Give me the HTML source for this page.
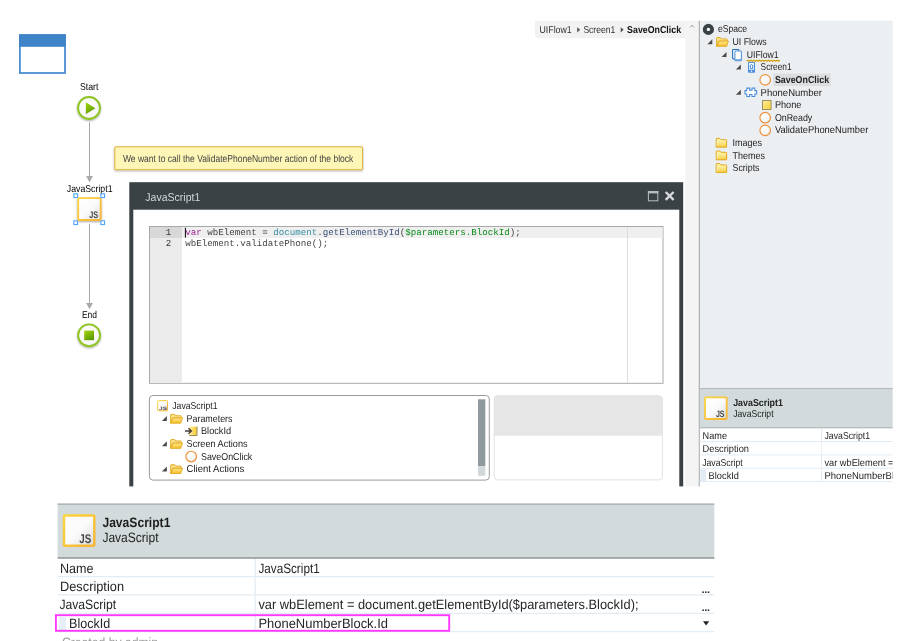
<!DOCTYPE html>
<html><head><meta charset="utf-8"><title>JavaScript1</title>
<style>
html,body{margin:0;padding:0;background:#fff;}
body{width:908px;height:641px;overflow:hidden;font-family:"Liberation Sans",sans-serif;}
svg{display:block;font-family:"Liberation Sans",sans-serif;text-rendering:geometricPrecision;}
.m{font-family:"Liberation Mono",monospace;}
</style></head><body>
<svg width="908" height="641" viewBox="0 0 908 641">
<defs>
<linearGradient id="gFold" x1="0" y1="0" x2="0" y2="1"><stop offset="0" stop-color="#fee88e"/><stop offset="1" stop-color="#f6bf2a"/></linearGradient>
<linearGradient id="gFold2" x1="0" y1="0" x2="0" y2="1"><stop offset="0" stop-color="#fdf0a0"/><stop offset="0.25" stop-color="#fdf2a8"/><stop offset="1" stop-color="#f7cd42"/></linearGradient>
<radialGradient id="gAct" cx="0.4" cy="0.35" r="0.75"><stop offset="0" stop-color="#ffffff"/><stop offset="0.6" stop-color="#f6f6f6"/><stop offset="1" stop-color="#dcdcdc"/></radialGradient>
<linearGradient id="gJs" x1="0" y1="0" x2="1" y2="1"><stop offset="0" stop-color="#ffffff"/><stop offset="0.5" stop-color="#fbfbfb"/><stop offset="1" stop-color="#d9d9d9"/></linearGradient>
<linearGradient id="gJsB" x1="0" y1="0" x2="1" y2="1"><stop offset="0" stop-color="#fbd63c"/><stop offset="1" stop-color="#f8b436"/></linearGradient>
<linearGradient id="gGreen" x1="0" y1="0" x2="0.6" y2="1"><stop offset="0" stop-color="#a5d610"/><stop offset="1" stop-color="#5d9a00"/></linearGradient>
<radialGradient id="gBall" cx="0.45" cy="0.4" r="0.7"><stop offset="0" stop-color="#ffffff"/><stop offset="0.7" stop-color="#f7f7f7"/><stop offset="1" stop-color="#e2e2e2"/></radialGradient>
<linearGradient id="gParam" x1="0" y1="0" x2="1" y2="0"><stop offset="0" stop-color="#fdf0a0"/><stop offset="1" stop-color="#f6c92c"/></linearGradient>
<linearGradient id="gPhone" x1="0" y1="0" x2="1" y2="1"><stop offset="0" stop-color="#fdee9a"/><stop offset="1" stop-color="#f7cf3a"/></linearGradient>
<filter id="sh" x="-30%" y="-30%" width="160%" height="170%"><feGaussianBlur in="SourceAlpha" stdDeviation="0.9"/><feOffset dx="0.4" dy="0.9"/><feComponentTransfer><feFuncA type="linear" slope="0.35"/></feComponentTransfer><feMerge><feMergeNode/><feMergeNode in="SourceGraphic"/></feMerge></filter>
</defs>
<rect width="908" height="641" fill="#fff"/>
<g opacity="0.999">

<path d="M535 20.7 L685.2 20.7 L685.2 38.3 L539 38.3 Q535 38.3 535 34.3 Z" fill="#f2f2f2"/>
<text x="539.5" y="32.5" font-size="10" fill="#303030" font-weight="400" text-anchor="start" textLength="32.2" lengthAdjust="spacingAndGlyphs">UIFlow1</text>
<path d="M577.2 27.2 L580.2 29.8 L577.2 32.4 Z" fill="#555"/>
<text x="583.4" y="32.5" font-size="10" fill="#303030" font-weight="400" text-anchor="start" textLength="31.8" lengthAdjust="spacingAndGlyphs">Screen1</text>
<path d="M620.7 27.2 L623.7 29.8 L620.7 32.4 Z" fill="#555"/>
<text x="627.1" y="32.5" font-size="10" fill="#111" font-weight="700" text-anchor="start" textLength="54" lengthAdjust="spacingAndGlyphs">SaveOnClick</text>
<rect x="685.2" y="20.7" width="13.8" height="465.7" fill="#f4f4f4"/>
<path d="M690.2 27.4 L692.2 25.2 L694.2 27.4" fill="none" stroke="#9c9c9c" stroke-width="1"/>
<rect x="699.6" y="20.7" width="193.1" height="367.8" fill="#ebeff2"/>
<line x1="699.3" y1="20.7" x2="699.3" y2="486.4" stroke="#94989a" stroke-width="0.9"/>
<circle cx="708.4" cy="29.400000000000002" r="3.65" fill="#fff" stroke="#3a4245" stroke-width="3.9"/>
<text x="718" y="32.4" font-size="10" fill="#1c1c1c" font-weight="400" text-anchor="start" textLength="29.1" lengthAdjust="spacingAndGlyphs">eSpace</text>
<path d="M712.3 39.32 L712.3 44.32 L707.3 44.32 Z" fill="#4c4c4c"/>
<g transform="translate(716.1 37.02)"><path d="M0.5 9.3 L0.5 1.1 Q0.5 0.5 1.1 0.5 L4.4 0.5 L5.5 1.9 L10.4 1.9 Q11 1.9 11 2.5 L11 4.2 L2.6 4.2 Z" fill="#fbe38c" stroke="#e2a418" stroke-width="0.9"/><path d="M2.7 4.0 L12.3 4.0 L10.5 9.3 L0.6 9.3 Z" fill="url(#gFold)" stroke="#e3a61a" stroke-width="0.9" stroke-linejoin="round"/></g>
<text x="732.5" y="45.02" font-size="10" fill="#1c1c1c" font-weight="400" text-anchor="start" textLength="34.1" lengthAdjust="spacingAndGlyphs">UI Flows</text>
<path d="M726.5 51.94 L726.5 56.94 L721.5 56.94 Z" fill="#4c4c4c"/>
<rect x="732.6" y="49.44" width="6.3" height="9.4" fill="#fff" stroke="#1c6fbe" stroke-width="1.1" rx="0.8"/>
<rect x="734.9" y="51.04" width="6.5" height="9.7" fill="#fff" stroke="#5b97d6" stroke-width="1.1" rx="0.8"/>
<line x1="735.4" y1="59.94" x2="741" y2="59.94" stroke="#5b97d6" stroke-width="1.4"/>
<text x="746.8" y="57.64" font-size="10" fill="#1c1c1c" font-weight="400" text-anchor="start" textLength="31.9" lengthAdjust="spacingAndGlyphs">UIFlow1</text>
<path d="M746.6 61.24 L748.05 60.24 L749.50 61.24 L750.95 60.24 L752.40 61.24 L753.85 60.24 L755.30 61.24 L756.75 60.24 L758.20 61.24 L759.65 60.24 L761.10 61.24 L762.55 60.24 L764.00 61.24 L765.45 60.24 L766.90 61.24 L768.35 60.24 L769.80 61.24 L771.25 60.24 L772.70 61.24 L774.15 60.24 L775.60 61.24 L777.05 60.24 L778.50 61.24 L779.95 60.24" fill="none" stroke="#d39f10" stroke-width="1.15"/>
<path d="M740.9 64.56 L740.9 69.56 L735.9 69.56 Z" fill="#4c4c4c"/>
<rect x="748" y="61.959999999999994" width="7" height="10.7" fill="#4a8ede" rx="0.9"/>
<rect x="749.1" y="62.959999999999994" width="4.8" height="6.8" fill="#fff"/>
<path d="M749.7 66.56 L751.5 64.16 L753.3 66.56 M750.4 66.25999999999999 L750.4 68.66 L752.6 68.66 L752.6 66.25999999999999" fill="none" stroke="#3b7fd0" stroke-width="0.9"/>
<circle cx="751.5" cy="71.25999999999999" r="0.7" fill="#fff"/>
<text x="760.6" y="70.26" font-size="10" fill="#1c1c1c" font-weight="400" text-anchor="start" textLength="31" lengthAdjust="spacingAndGlyphs">Screen1</text>
<rect x="773.3" y="73.58" width="57.5" height="12.5" fill="#dcdfe1"/>
<circle cx="765.2" cy="79.88" r="5.3" fill="url(#gAct)" stroke="#f0913a" stroke-width="1.15"/>
<text x="774.9" y="82.88" font-size="10" fill="#222" font-weight="700" text-anchor="start" textLength="54.2" lengthAdjust="spacingAndGlyphs">SaveOnClick</text>
<path d="M740.9 89.8 L740.9 94.8 L735.9 94.8 Z" fill="#4c4c4c"/>
<g transform="translate(744.5 87.60000000000001)" fill="#fff" stroke="#4a8cd8" stroke-width="1.05"><path d="M2.3 0.5 L5.1 0.5 L5.1 2.5 L7.5 2.5 L7.5 0.5 L10.3 0.5 L10.3 3 L12.1 3 L12.1 6.3 L10.3 6.3 L10.3 8.9 L7.5 8.9 L7.5 6.9 L5.1 6.9 L5.1 8.9 L2.3 8.9 L2.3 6.3 L0.5 6.3 L0.5 3 L2.3 3 Z"/></g>
<text x="760.6" y="95.5" font-size="10" fill="#1c1c1c" font-weight="400" text-anchor="start" textLength="61.4" lengthAdjust="spacingAndGlyphs">PhoneNumber</text>
<rect x="762.5" y="100.61999999999999" width="8.6" height="8.8" fill="url(#gPhone)" stroke="#8a7a4a" stroke-width="0.8"/>
<text x="774.9" y="108.12" font-size="10" fill="#1c1c1c" font-weight="400" text-anchor="start" textLength="26.5" lengthAdjust="spacingAndGlyphs">Phone</text>
<circle cx="765.2" cy="117.74" r="5.3" fill="url(#gAct)" stroke="#f0913a" stroke-width="1.15"/>
<text x="774.9" y="120.74" font-size="10" fill="#1c1c1c" font-weight="400" text-anchor="start" textLength="37.4" lengthAdjust="spacingAndGlyphs">OnReady</text>
<circle cx="765.2" cy="130.35999999999999" r="5.3" fill="url(#gAct)" stroke="#f0913a" stroke-width="1.15"/>
<text x="774.9" y="133.36" font-size="10" fill="#1c1c1c" font-weight="400" text-anchor="start" textLength="93.4" lengthAdjust="spacingAndGlyphs">ValidatePhoneNumber</text>
<g transform="translate(715.7 137.88)"><path d="M0.5 9.3 L0.5 1.1 Q0.5 0.5 1.1 0.5 L4.2 0.5 L5.3 1.8 L10.3 1.8 Q10.9 1.8 10.9 2.4 L10.9 9.3 Z" fill="url(#gFold2)" stroke="#e2a418" stroke-width="0.95" stroke-linejoin="round"/><path d="M1.5 3.0 L1.5 8.4" stroke="#fffbe0" stroke-width="0.8" opacity="0.8"/></g>
<text x="732.5" y="145.98" font-size="10" fill="#1c1c1c" font-weight="400" text-anchor="start" textLength="29.4" lengthAdjust="spacingAndGlyphs">Images</text>
<g transform="translate(715.7 150.5)"><path d="M0.5 9.3 L0.5 1.1 Q0.5 0.5 1.1 0.5 L4.2 0.5 L5.3 1.8 L10.3 1.8 Q10.9 1.8 10.9 2.4 L10.9 9.3 Z" fill="url(#gFold2)" stroke="#e2a418" stroke-width="0.95" stroke-linejoin="round"/><path d="M1.5 3.0 L1.5 8.4" stroke="#fffbe0" stroke-width="0.8" opacity="0.8"/></g>
<text x="732.5" y="158.6" font-size="10" fill="#1c1c1c" font-weight="400" text-anchor="start" textLength="32.4" lengthAdjust="spacingAndGlyphs">Themes</text>
<g transform="translate(715.7 163.12)"><path d="M0.5 9.3 L0.5 1.1 Q0.5 0.5 1.1 0.5 L4.2 0.5 L5.3 1.8 L10.3 1.8 Q10.9 1.8 10.9 2.4 L10.9 9.3 Z" fill="url(#gFold2)" stroke="#e2a418" stroke-width="0.95" stroke-linejoin="round"/><path d="M1.5 3.0 L1.5 8.4" stroke="#fffbe0" stroke-width="0.8" opacity="0.8"/></g>
<text x="732.5" y="171.22" font-size="10" fill="#1c1c1c" font-weight="400" text-anchor="start" textLength="27" lengthAdjust="spacingAndGlyphs">Scripts</text>
<rect x="699.9" y="388.5" width="192.8" height="39.5" fill="#d2dadc"/>
<line x1="699.9" y1="388.6" x2="892.7" y2="388.6" stroke="#aeb5b7" stroke-width="1"/>
<line x1="699.9" y1="428" x2="892.7" y2="428" stroke="#9ba2a4" stroke-width="1"/>
<rect x="705.1" y="397.29999999999995" width="21.6" height="21.7" fill="url(#gJs)" stroke="url(#gJsB)" stroke-width="1.8" rx="0.8"/>
<text x="724.6" y="417.3" font-size="9.2" fill="#484848" font-weight="700" text-anchor="end" textLength="8.7" lengthAdjust="spacingAndGlyphs">JS</text>
<text x="733.2" y="405.8" font-size="10" fill="#222" font-weight="700" text-anchor="start" textLength="49.7" lengthAdjust="spacingAndGlyphs">JavaScript1</text>
<text x="733.2" y="416.7" font-size="10" fill="#222" font-weight="400" text-anchor="start" textLength="40.4" lengthAdjust="spacingAndGlyphs">JavaScript</text>
<rect x="699.9" y="428.5" width="192.8" height="57.9" fill="#fff"/>
<line x1="699.9" y1="441.55" x2="892.7" y2="441.55" stroke="#e2ecf4" stroke-width="1"/>
<line x1="699.9" y1="454.9" x2="892.7" y2="454.9" stroke="#e2ecf4" stroke-width="1"/>
<line x1="699.9" y1="468.25" x2="892.7" y2="468.25" stroke="#e2ecf4" stroke-width="1"/>
<line x1="699.9" y1="481.6" x2="892.7" y2="481.6" stroke="#e2ecf4" stroke-width="1"/>
<line x1="821.7" y1="428.5" x2="821.7" y2="481.6" stroke="#e2ecf4" stroke-width="1"/>
<rect x="700.2" y="468.85" width="5.8" height="12.25" fill="#e3ecf5"/>
<text x="702.6" y="438.8" font-size="10" fill="#1e1e1e" font-weight="400" text-anchor="start" textLength="24.4" lengthAdjust="spacingAndGlyphs">Name</text>
<text x="702.6" y="452.1" font-size="10" fill="#1e1e1e" font-weight="400" text-anchor="start" textLength="46.4" lengthAdjust="spacingAndGlyphs">Description</text>
<text x="702.2" y="465.5" font-size="10" fill="#1e1e1e" font-weight="400" text-anchor="start" textLength="40.6" lengthAdjust="spacingAndGlyphs">JavaScript</text>
<text x="708.6" y="478.8" font-size="10" fill="#1e1e1e" font-weight="400" text-anchor="start" textLength="30.4" lengthAdjust="spacingAndGlyphs">BlockId</text>
<clipPath id="cpR"><rect x="700" y="428" width="192.70000000000005" height="58.39999999999998"/></clipPath>
<g clip-path="url(#cpR)">
<text x="824.5" y="438.8" font-size="10" fill="#1e1e1e" font-weight="400" text-anchor="start" textLength="45.5" lengthAdjust="spacingAndGlyphs">JavaScript1</text>
<text x="824.5" y="465.5" font-size="10" fill="#1e1e1e" font-weight="400" text-anchor="start" textLength="112" lengthAdjust="spacingAndGlyphs">var wbElement = document</text>
<text x="824.5" y="478.8" font-size="10" fill="#1e1e1e" font-weight="400" text-anchor="start" textLength="94.8" lengthAdjust="spacingAndGlyphs">PhoneNumberBlock.Id</text>
</g>
<rect x="19.9" y="35.2" width="45.1" height="37.8" fill="#fff" stroke="#4a8dd2" stroke-width="1.8"/>
<rect x="19.0" y="34.3" width="46.9" height="12.5" fill="#3e84c7"/>
<text x="79.9" y="90.4" font-size="10" fill="#000" font-weight="400" text-anchor="start" textLength="18.5" lengthAdjust="spacingAndGlyphs">Start</text>
<line x1="89.5" y1="122.4" x2="89.5" y2="177" stroke="#a6a6a6" stroke-width="1"/>
<path d="M86.1 176 L92.9 176 L89.5 182.6 Z" fill="#a9a9a9"/>
<g filter="url(#sh)"><circle cx="89" cy="108" r="10.95" fill="url(#gBall)" stroke="#8fc424" stroke-width="1.9"/></g>
<path d="M85.8 102.2 L95.4 108.2 L85.8 114.2 Z" fill="url(#gGreen)"/>
<text x="66.8" y="191.7" font-size="10" fill="#000" font-weight="400" text-anchor="start" textLength="45.7" lengthAdjust="spacingAndGlyphs">JavaScript1</text>
<line x1="89.5" y1="224" x2="89.5" y2="304" stroke="#a6a6a6" stroke-width="1"/>
<path d="M86.1 303 L92.9 303 L89.5 309.2 Z" fill="#a9a9a9"/>
<g filter="url(#sh)">
<rect x="78.2" y="198.2" width="22.5" height="21.8" fill="url(#gJs)" stroke="url(#gJsB)" stroke-width="1.8" rx="0.8"/>
</g>
<text x="98.2" y="218.0" font-size="9.6" fill="#484848" font-weight="700" text-anchor="end" textLength="8.9" lengthAdjust="spacingAndGlyphs">JS</text>
<rect x="73.85" y="193.85000000000002" width="3.7" height="3.7" fill="#fff" stroke="#4da4fb" stroke-width="1.1"/>
<rect x="73.85" y="220.85000000000002" width="3.7" height="3.7" fill="#fff" stroke="#4da4fb" stroke-width="1.1"/>
<rect x="100.85" y="193.85000000000002" width="3.7" height="3.7" fill="#fff" stroke="#4da4fb" stroke-width="1.1"/>
<rect x="100.85" y="220.85000000000002" width="3.7" height="3.7" fill="#fff" stroke="#4da4fb" stroke-width="1.1"/>
<text x="81.9" y="317.7" font-size="10" fill="#000" font-weight="400" text-anchor="start" textLength="15.1" lengthAdjust="spacingAndGlyphs">End</text>
<g filter="url(#sh)"><circle cx="89.1" cy="335.3" r="10.95" fill="url(#gBall)" stroke="#8fc424" stroke-width="1.9"/></g>
<rect x="84.2" y="330.6" width="9.8" height="9.6" fill="url(#gGreen)"/>
<g filter="url(#sh)">
<rect x="114.8" y="146.8" width="247.7" height="22.9" fill="#fdf6b6" stroke="#e2b43a" stroke-width="1" rx="0.6"/>
</g>
<text x="122.9" y="162" font-size="10.1" fill="#454545" font-weight="400" text-anchor="start" textLength="230.5" lengthAdjust="spacingAndGlyphs">We want to call the ValidatePhoneNumber action of the block</text>
<rect x="129.3" y="182.2" width="553.9" height="304.2" fill="#3a4245"/>
<rect x="133.3" y="209.7" width="546.0" height="278.3" fill="#fff"/>
<text x="145.3" y="200.9" font-size="11.4" fill="#d4d7d8" font-weight="400" text-anchor="start" textLength="55" lengthAdjust="spacingAndGlyphs">JavaScript1</text>
<rect x="648.4" y="191.6" width="9.4" height="9.2" fill="none" stroke="#b9bec0" stroke-width="1"/>
<rect x="647.9" y="191.0" width="10.4" height="2.4" fill="#b9bec0"/>
<path d="M665.7 192 L673.6 199.9 M673.6 192 L665.7 199.9" stroke="#d6d9da" stroke-width="2.4" fill="none"/>
<rect x="149.5" y="226.5" width="513.5" height="156.8" fill="#fff" stroke="#a9a9a9" stroke-width="1"/>
<rect x="150" y="227" width="32" height="155.8" fill="#ebebeb"/>
<rect x="150" y="227" width="32" height="11" fill="#d8d8d8"/>
<rect x="182" y="227" width="480.5" height="11" fill="#efefef"/>
<line x1="627.5" y1="227" x2="627.5" y2="382.8" stroke="#dddddd" stroke-width="1"/>
<text x="171.2" y="235" font-size="9.17" fill="#333" font-weight="400" text-anchor="end" class="m">1</text>
<text x="171.2" y="246.1" font-size="9.17" fill="#333" font-weight="400" text-anchor="end" class="m">2</text>
<line x1="185.4" y1="227.8" x2="185.4" y2="237.6" stroke="#000" stroke-width="1"/>
<text class="m" x="185.3" y="235" font-size="9.17" textLength="335.5" lengthAdjust="spacingAndGlyphs" xml:space="preserve" fill="#444"><tspan fill="#a0209a">var</tspan> wbElement = <tspan fill="#3a8ea4">document</tspan>.<tspan fill="#3d5578">getElementById</tspan>(<tspan fill="#0a8a1a">$parameters.BlockId</tspan>);</text>
<text class="m" x="185.3" y="246.1" font-size="9.17" textLength="143.0" lengthAdjust="spacingAndGlyphs" fill="#444">wbElement.validatePhone();</text>
<rect x="149.4" y="395.5" width="339.9" height="84.6" fill="#fff" stroke="#9a9a9a" stroke-width="1" rx="3.5"/>
<rect x="478" y="399.3" width="7.3" height="66.9" fill="#8f9a9e"/>
<rect x="478" y="466.2" width="7.3" height="9.6" fill="#d2d8da"/>
<clipPath id="cpB"><rect x="494.2" y="395.8" width="168.2" height="84.1" rx="3.5"/></clipPath>
<g clip-path="url(#cpB)"><rect x="494" y="395" width="169" height="86" fill="#fff"/><rect x="494" y="395" width="169" height="40.7" fill="#e6e6e6"/></g>
<rect x="494.2" y="395.8" width="168.2" height="84.1" fill="none" stroke="#e2e2e2" stroke-width="1" rx="3.5"/>
<rect x="157.7" y="400.6" width="9.8" height="10.2" fill="url(#gJs)" stroke="url(#gJsB)" stroke-width="1.0" rx="0.8"/>
<text x="167.0" y="409.8" font-size="4.8" fill="#484848" font-weight="700" text-anchor="end" textLength="8" lengthAdjust="spacingAndGlyphs">JS</text>
<text x="172.3" y="409.2" font-size="10" fill="#1c1c1c" font-weight="400" text-anchor="start" textLength="45.2" lengthAdjust="spacingAndGlyphs">JavaScript1</text>
<path d="M166.9 416.05 L166.9 421.05 L161.9 421.05 Z" fill="#4c4c4c"/>
<g transform="translate(170.2 413.84999999999997)"><path d="M0.5 9.3 L0.5 1.1 Q0.5 0.5 1.1 0.5 L4.4 0.5 L5.5 1.9 L10.4 1.9 Q11 1.9 11 2.5 L11 4.2 L2.6 4.2 Z" fill="#fbe38c" stroke="#e2a418" stroke-width="0.9"/><path d="M2.7 4.0 L12.3 4.0 L10.5 9.3 L0.6 9.3 Z" fill="url(#gFold)" stroke="#e3a61a" stroke-width="0.9" stroke-linejoin="round"/></g>
<text x="186.6" y="421.75" font-size="10" fill="#1c1c1c" font-weight="400" text-anchor="start" textLength="45.9" lengthAdjust="spacingAndGlyphs">Parameters</text>
<rect x="189.2" y="426.65" width="7.6" height="8.7" fill="url(#gParam)"/>
<path d="M189.2 435.55 L197 435.55 L197 426.65" fill="none" stroke="#8b7b52" stroke-width="0.9"/>
<path d="M185 431.05 L190.8 431.05 M188.4 428.35 L191.4 431.05 L188.4 433.75" fill="none" stroke="#4a3c3c" stroke-width="1.4"/>
<text x="201" y="434.35" font-size="10" fill="#1c1c1c" font-weight="400" text-anchor="start" textLength="30.1" lengthAdjust="spacingAndGlyphs">BlockId</text>
<path d="M166.9 441.25 L166.9 446.25 L161.9 446.25 Z" fill="#4c4c4c"/>
<g transform="translate(170.2 439.04999999999995)"><path d="M0.5 9.3 L0.5 1.1 Q0.5 0.5 1.1 0.5 L4.4 0.5 L5.5 1.9 L10.4 1.9 Q11 1.9 11 2.5 L11 4.2 L2.6 4.2 Z" fill="#fbe38c" stroke="#e2a418" stroke-width="0.9"/><path d="M2.7 4.0 L12.3 4.0 L10.5 9.3 L0.6 9.3 Z" fill="url(#gFold)" stroke="#e3a61a" stroke-width="0.9" stroke-linejoin="round"/></g>
<text x="186.6" y="446.95" font-size="10" fill="#1c1c1c" font-weight="400" text-anchor="start" textLength="61" lengthAdjust="spacingAndGlyphs">Screen Actions</text>
<circle cx="191.2" cy="456.5" r="5.3" fill="url(#gAct)" stroke="#f0913a" stroke-width="1.15"/>
<text x="201" y="459.5" font-size="10" fill="#1c1c1c" font-weight="400" text-anchor="start" textLength="51.3" lengthAdjust="spacingAndGlyphs">SaveOnClick</text>
<path d="M166.9 466.4 L166.9 471.4 L161.9 471.4 Z" fill="#4c4c4c"/>
<g transform="translate(170.2 464.2)"><path d="M0.5 9.3 L0.5 1.1 Q0.5 0.5 1.1 0.5 L4.4 0.5 L5.5 1.9 L10.4 1.9 Q11 1.9 11 2.5 L11 4.2 L2.6 4.2 Z" fill="#fbe38c" stroke="#e2a418" stroke-width="0.9"/><path d="M2.7 4.0 L12.3 4.0 L10.5 9.3 L0.6 9.3 Z" fill="url(#gFold)" stroke="#e3a61a" stroke-width="0.9" stroke-linejoin="round"/></g>
<text x="186.6" y="472.1" font-size="10" fill="#1c1c1c" font-weight="400" text-anchor="start" textLength="57.7" lengthAdjust="spacingAndGlyphs">Client Actions</text>
<rect x="57.6" y="503.7" width="656.7" height="54.5" fill="#d2dadc"/>
<line x1="57.6" y1="504.1" x2="714.3" y2="504.1" stroke="#a4abad" stroke-width="1.2"/>
<line x1="57.6" y1="558" x2="714.3" y2="558" stroke="#8f9698" stroke-width="1.4"/>
<rect x="64.0" y="515.5" width="30.3" height="30.2" fill="url(#gJs)" stroke="url(#gJsB)" stroke-width="2.4" rx="0.8"/>
<text x="91.2" y="542.7" font-size="12.6" fill="#484848" font-weight="700" text-anchor="end" textLength="12" lengthAdjust="spacingAndGlyphs">JS</text>
<text x="102.4" y="527" font-size="13.6" fill="#1e1e1e" font-weight="700" text-anchor="start" textLength="68" lengthAdjust="spacingAndGlyphs">JavaScript1</text>
<text x="102.4" y="541.6" font-size="13.6" fill="#1e1e1e" font-weight="400" text-anchor="start" textLength="56.2" lengthAdjust="spacingAndGlyphs">JavaScript</text>
<line x1="57.6" y1="576.57" x2="714.3" y2="576.57" stroke="#e2ecf4" stroke-width="1.2"/>
<line x1="57.6" y1="594.94" x2="714.3" y2="594.94" stroke="#e2ecf4" stroke-width="1.2"/>
<line x1="57.6" y1="613.31" x2="714.3" y2="613.31" stroke="#e2ecf4" stroke-width="1.2"/>
<line x1="57.6" y1="631.68" x2="714.3" y2="631.68" stroke="#e2ecf4" stroke-width="1.2"/>
<line x1="255.2" y1="559" x2="255.2" y2="631.68" stroke="#e2ecf4" stroke-width="1.2"/>
<rect x="58.8" y="617" width="7.2" height="13" fill="#e6eef7"/>
<text x="60" y="572.7" font-size="13.6" fill="#262626" font-weight="400" text-anchor="start" textLength="33.5" lengthAdjust="spacingAndGlyphs">Name</text>
<text x="60" y="591.0" font-size="13.6" fill="#262626" font-weight="400" text-anchor="start" textLength="64" lengthAdjust="spacingAndGlyphs">Description</text>
<text x="59.4" y="609.4" font-size="13.6" fill="#262626" font-weight="400" text-anchor="start" textLength="56.8" lengthAdjust="spacingAndGlyphs">JavaScript</text>
<text x="69" y="627.8" font-size="13.6" fill="#262626" font-weight="400" text-anchor="start" textLength="41.2" lengthAdjust="spacingAndGlyphs">BlockId</text>
<text x="258.4" y="572.7" font-size="13.6" fill="#262626" font-weight="400" text-anchor="start" textLength="61.3" lengthAdjust="spacingAndGlyphs">JavaScript1</text>
<text x="258.4" y="609.4" font-size="13.6" fill="#262626" font-weight="400" text-anchor="start" textLength="380.1" lengthAdjust="spacingAndGlyphs">var wbElement = document.getElementById($parameters.BlockId);</text>
<text x="258.4" y="627.8" font-size="13.6" fill="#262626" font-weight="400" text-anchor="start" textLength="129.6" lengthAdjust="spacingAndGlyphs">PhoneNumberBlock.Id</text>
<rect x="702.3" y="591.4000000000001" width="1.6" height="1.6" fill="#333"/>
<rect x="705.0" y="591.4000000000001" width="1.6" height="1.6" fill="#333"/>
<rect x="707.6999999999999" y="591.4000000000001" width="1.6" height="1.6" fill="#333"/>
<rect x="702.3" y="609.4000000000001" width="1.6" height="1.6" fill="#333"/>
<rect x="705.0" y="609.4000000000001" width="1.6" height="1.6" fill="#333"/>
<rect x="707.6999999999999" y="609.4000000000001" width="1.6" height="1.6" fill="#333"/>
<path d="M703 621.2 L709.2 621.2 L706.1 625.4 Z" fill="#222"/>
<text x="62" y="647.3" font-size="13.6" fill="#9a9a9a" font-weight="400" text-anchor="start" textLength="96" lengthAdjust="spacingAndGlyphs">Created by admin</text>
<rect x="55.9" y="615.2" width="393.3" height="15.6" fill="none" stroke="#ff38ff" stroke-width="1.9"/>
</g></svg></body></html>
